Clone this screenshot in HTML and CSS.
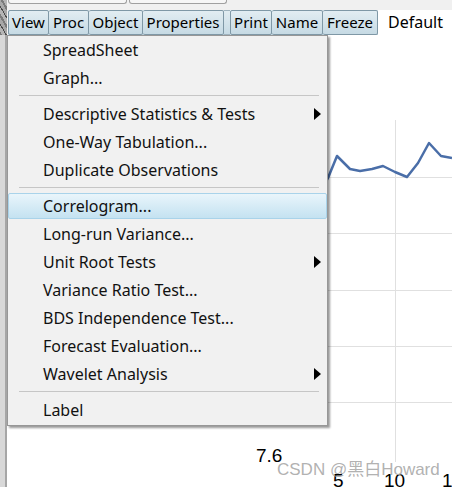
FILE: index.html
```html
<!DOCTYPE html>
<html>
<head>
<meta charset="utf-8">
<link rel="stylesheet" href="styles.css">
</head>
<body>
<div class="screen">
  <div class="desk"><div class="desk-top"></div><div class="desk-bottom"></div></div>
  <div class="app">
    <div class="tabs"><span class="tab t1"></span><span class="tab t2"></span></div>
    <div class="toolbar">
      <div class="btns">
        <span class="btn b-view">View</span>
        <span class="btn b-proc">Proc</span>
        <span class="btn b-object">Object</span>
        <span class="btn b-props">Properties</span>
        <span class="gap"></span>
        <span class="btn b-print">Print</span>
        <span class="btn b-name">Name</span>
        <span class="btn b-freeze">Freeze</span>
      </div>
      <div class="default">Default</div>
    </div>
    <div class="graph">
      <svg class="plot" width="445" height="452" viewBox="0 0 445 452">
        <g transform="translate(-7 -35)">
          <g stroke="#e0e0e0" stroke-width="1">
            <line x1="7" y1="177.5" x2="452" y2="177.5"/>
            <line x1="7" y1="233.5" x2="452" y2="233.5"/>
            <line x1="7" y1="290.5" x2="452" y2="290.5"/>
            <line x1="7" y1="346.5" x2="452" y2="346.5"/>
            <line x1="7" y1="402.5" x2="452" y2="402.5"/>
            <line x1="395.5" y1="120" x2="395.5" y2="462"/>
          </g>
          <polyline fill="none" stroke="#4a6ea8" stroke-width="2.5" stroke-linejoin="round"
            points="300,230 328,178 337,156 350,169 360,171 372,169 383,166 395,172 407,177 418,163 429,143 441,156 452,158"/>
          <text class="ax" x="256" y="462">7.6</text>
          <text class="ax" x="333" y="487">5</text>
          <text class="ax" x="384" y="487">10</text>
          <text class="ax" x="442" y="487">1</text>
          <text class="wm" x="277" y="475">CSDN @黑白Howard</text>
        </g>
      </svg>
    </div>
    <div class="menu">
      <div class="item">SpreadSheet</div>
      <div class="item">Graph...</div>
      <div class="sep"></div>
      <div class="item sub">Descriptive Statistics &amp; Tests<span class="arrow"></span></div>
      <div class="item">One-Way Tabulation...</div>
      <div class="item">Duplicate Observations</div>
      <div class="sep"></div>
      <div class="item hl">Correlogram...</div>
      <div class="item">Long-run Variance...</div>
      <div class="item sub">Unit Root Tests<span class="arrow"></span></div>
      <div class="item">Variance Ratio Test...</div>
      <div class="item">BDS Independence Test...</div>
      <div class="item">Forecast Evaluation...</div>
      <div class="item sub">Wavelet Analysis<span class="arrow"></span></div>
      <div class="sep"></div>
      <div class="item">Label</div>
    </div>
  </div>
</div>
</body>
</html>
```
FILE: styles.css
```css
html, body {
  margin: 0;
  padding: 0;
}
body {
  width: 452px;
  height: 487px;
  overflow: hidden;
  background: #f0f0f0;
  font-family: "Noto Sans", "Open Sans", sans-serif;
}
.screen {
  display: flex;
  width: 452px;
  height: 487px;
}
.desk {
  width: 7px;
  display: flex;
  flex-direction: column;
}
.desk-top {
  height: 35px;
  background: repeating-linear-gradient(60deg, #7a7a7a 0 2px, #b5b5b5 2px 5px, #4a4a4a 5px 6px, #a8a8a8 6px 9px);
}
.desk-bottom {
  flex: 1;
  background: #d8d8d8;
  border-right: 2px solid #a6a6a6;
}
.app {
  position: relative;
  flex: 1;
  display: flex;
  flex-direction: column;
  min-width: 0;
}
.tabs {
  height: 10px;
  background: #f0f0f0;
  display: flex;
  align-items: flex-start;
}
.tab {
  height: 3px;
  background: #f6f6f6;
  border: 1px solid #a0a0a0;
  border-top: none;
  border-radius: 0 0 3px 3px;
}
.t1 {
  margin-left: 1px;
  width: 117px;
}
.t2 {
  margin-left: 2px;
  width: 96px;
}
.toolbar {
  height: 25px;
  display: flex;
  padding-left: 1px;
  background: #f0f0f0;
}
.btns {
  display: flex;
  background: linear-gradient(#e2edf2, #c6dae4);
}
.btn {
  box-sizing: border-box;
  height: 25px;
  line-height: 23px;
  font-size: 15px;
  color: #000;
  text-align: center;
  border: 1px solid #7f98a6;
  border-left: none;
  border-radius: 2px;
  background: linear-gradient(#e2edf2, #c6dae4);
}
.b-view { width: 41px; border-left: 1px solid #7f98a6; }
.b-proc { width: 40px; }
.b-object { width: 54px; }
.b-props { width: 81px; }
.gap {
  width: 6px;
  border-top: 1px solid #9fb3be;
  border-bottom: 1px solid #9fb3be;
  box-sizing: border-box;
}
.b-print { width: 42px; border-left: 1px solid #7f98a6; }
.b-name { width: 51px; }
.b-freeze { width: 55px; }
.default {
  flex: 1;
  background: #fff;
  font-size: 16px;
  line-height: 25px;
  padding-left: 10px;
  color: #000;
}
.graph {
  flex: 1;
  background: #fff;
  overflow: hidden;
}
.plot {
  display: block;
}
.ax {
  font-family: "Liberation Sans", Arial, sans-serif;
  font-size: 19px;
  fill: #000;
}
.wm {
  font-family: "Liberation Sans", "Noto Sans CJK SC", sans-serif;
  font-size: 17px;
  fill: #a8a8a8;
  fill-opacity: 0.9;
}
.menu {
  position: absolute;
  left: 0;
  top: 35px;
  width: 321px;
  box-sizing: border-box;
  padding: 0 0 1px;
  display: flex;
  flex-direction: column;
  background: #f1f1f1;
  border: 1px solid #979797;
  box-shadow: 2px 2px 2px rgba(0, 0, 0, 0.4);
}
.item {
  height: 26px;
  margin: 1px 0;
  padding-left: 35px;
  padding-right: 5px;
  font-size: 16px;
  line-height: 26px;
  color: #111;
  display: flex;
  align-items: center;
  justify-content: space-between;
  box-sizing: border-box;
  border: 1px solid transparent;
  border-left: none;
}
.item.hl {
  padding-left: 34px;
  background: linear-gradient(#e9f5fb, #c4e2f1);
  border: 1px solid #a9d3ea;
  border-radius: 2px;
}
.arrow {
  width: 0;
  height: 0;
  border-left: 7px solid #000;
  border-top: 6px solid transparent;
  border-bottom: 6px solid transparent;
}
.sep {
  height: 8px;
  flex: none;
  position: relative;
}
.sep::after {
  content: "";
  position: absolute;
  left: 11px;
  right: 8px;
  top: 3px;
  border-top: 1px solid #c6c6c6;
}
```
